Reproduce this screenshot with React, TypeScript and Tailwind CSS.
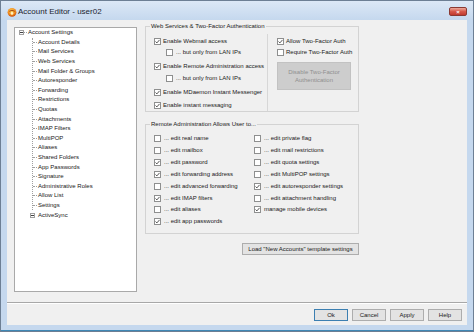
import clsx from 'clsx'

const treeItems = [
  'Account Details',
  'Mail Services',
  'Web Services',
  'Mail Folder & Groups',
  'Autoresponder',
  'Forwarding',
  'Restrictions',
  'Quotas',
  'Attachments',
  'IMAP Filters',
  'MultiPOP',
  'Aliases',
  'Shared Folders',
  'App Passwords',
  'Signature',
  'Administrative Roles',
  'Allow List',
  'Settings',
]

const leftPerms: [string, boolean][] = [
  ['... edit real name', false],
  ['... edit mailbox', false],
  ['... edit password', true],
  ['... edit forwarding address', true],
  ['... edit advanced forwarding', false],
  ['... edit IMAP filters', true],
  ['... edit aliases', false],
  ['... edit app passwords', true],
]

const rightPerms: [string, boolean][] = [
  ['... edit private flag', false],
  ['... edit mail restrictions', false],
  ['... edit quota settings', false],
  ['... edit MultiPOP settings', false],
  ['... edit autoresponder settings', true],
  ['... edit attachment handling', false],
  ['manage mobile devices', true],
]

function Check({ checked }: { checked?: boolean }) {
  return (
    <span className="flex h-[7px] w-[7px] shrink-0 items-center justify-center border border-[#8e8f8f] bg-white">
      {checked && (
        <svg className="h-[5px] w-[5px]" viewBox="0 0 5 5">
          <path d="M0.5 2.5 L1.9 3.9 L4.5 0.9" fill="none" stroke="#2b2b2b" strokeWidth="0.8" />
        </svg>
      )}
    </span>
  )
}

function CheckRow({ label, checked, className }: { label: string; checked?: boolean; className?: string }) {
  return (
    <div className={clsx('flex h-[9px] items-center gap-[2px] whitespace-nowrap', className)}>
      <Check checked={checked} />
      <span>{label}</span>
    </div>
  )
}

function Button({ label, primary }: { label: string; primary?: boolean }) {
  return (
    <div
      className={clsx(
        'flex h-[12px] w-[34px] items-center justify-center border bg-[#e3e3e3]',
        primary ? 'border-[#3c7fb1]' : 'border-[#adadad]',
      )}
    >
      {label}
    </div>
  )
}

function AppIcon() {
  return (
    <svg className="h-[10px] w-[10px] shrink-0" viewBox="0 0 10 10">
      <defs>
        <radialGradient id="ico" cx="0.45" cy="0.35" r="0.7">
          <stop offset="0" stopColor="#ffd35a" />
          <stop offset="0.6" stopColor="#f08a1c" />
          <stop offset="1" stopColor="#c2410c" />
        </radialGradient>
      </defs>
      <circle cx="5" cy="5.3" fill="url(#ico)" r="4.4" />
      <path d="M2.3 4.3 Q5 2.2 7.7 4.3" fill="none" stroke="#8a2a06" strokeWidth="0.8" />
      <circle cx="5" cy="6.4" fill="#fff3c4" r="1.3" />
    </svg>
  )
}

export default function App() {
  return (
    <div className="flex h-[332px] w-[474px] flex-col border border-[#6d7f94] bg-[#c5d8ee] font-['Liberation_Sans',Arial,sans-serif] text-[6px] leading-[9px] text-[#202020]">
      {/* title bar */}
      <div className="flex h-[19px] shrink-0 items-start bg-gradient-to-b from-[#dce8f6] to-[#c5d8ee] pl-[6px] pr-[6px] pt-[6px]">
        <AppIcon />
        <span className="ml-[1px] text-[8px] leading-[10px] text-[#1b2430]">Account Editor - user02</span>
        <div className="flex-1" />
        <div className="flex h-[9px] w-[18px] items-center justify-center rounded-[2px] border border-[#8a3a33] bg-gradient-to-b from-[#eba99c] via-[#d6584a] to-[#c0392f] text-[6px] font-bold leading-none text-white">
          ×
        </div>
      </div>

      {/* client area */}
      <div className="mx-[6px] mb-[5px] flex flex-1 flex-col bg-[#f0f0f0]">
        <div className="flex gap-[8px] pl-[7px] pt-[2px]">
          {/* tree */}
          <div className="mt-[5px] h-[265px] w-[123px] shrink-0 border border-[#a9a9a9] bg-white">
            <div className="flex h-[9.6px] items-center pl-[4px]">
              <span className="flex h-[5px] w-[5px] items-center justify-center border border-[#a0a0a0] bg-white">
                <span className="h-px w-[3px] bg-[#404040]" />
              </span>
              <span className="w-[3px] border-t border-dotted border-[#a0a0a0]" />
              <span className="ml-[1px]">Account Settings</span>
            </div>
            <div className="ml-[17px]">
              <div className="border-l border-dotted border-[#a0a0a0]">
                {treeItems.map(item => (
                  <div key={item} className="flex h-[9.6px] items-center whitespace-nowrap">
                    <span className="w-[4px] border-t border-dotted border-[#a0a0a0]" />
                    <span className="ml-[1px]">{item}</span>
                  </div>
                ))}
              </div>
              <div className="flex h-[9.6px] items-center whitespace-nowrap">
                <span className="-ml-[2px] flex h-[5px] w-[5px] items-center justify-center border border-[#a0a0a0] bg-white">
                  <span className="h-px w-[3px] bg-[#404040]" />
                </span>
                <span className="ml-[3px]">ActiveSync</span>
              </div>
            </div>
          </div>

          {/* right column */}
          <div className="flex w-[214px] flex-col">
            <fieldset className="h-[90px] border border-[#d3d3d3]">
              <legend className="ml-[4px] px-[1px] leading-[8px]">Web Services &amp; Two-Factor Authentication</legend>
              <div className="flex h-[82px] pl-[8px]">
                <div className="w-[113px] pt-[7px]">
                  <CheckRow checked label="Enable Webmail access" />
                  <CheckRow className="ml-[12px] mt-[2px] gap-[3px]" label="... but only from LAN IPs" />
                  <CheckRow checked className="mt-[5px]" label="Enable Remote Administration access" />
                  <CheckRow className="ml-[12px] mt-[3px] gap-[3px]" label="... but only from LAN IPs" />
                  <CheckRow checked className="mt-[5px]" label="Enable MDaemon Instant Messenger" />
                  <CheckRow checked className="mt-[4px]" label="Enable instant messaging" />
                </div>
                <div className="mb-[1px] mt-[4px] w-px bg-[#d7d7d7]" />
                <div className="flex w-[74px] flex-col pl-[9px] pt-[7px]">
                  <CheckRow checked label="Allow Two-Factor Auth" />
                  <CheckRow className="mt-[2px]" label="Require Two-Factor Auth" />
                  <div className="mt-[5px] flex h-[28px] w-[74px] flex-col items-center justify-center border border-[#c2c2c2] bg-[#cdcdcd] leading-[8px] text-[#8f8f8f]">
                    <span>Disable Two-Factor</span>
                    <span>Authentication</span>
                  </div>
                </div>
              </div>
            </fieldset>

            <fieldset className="mt-[8px] h-[114px] border border-[#d3d3d3]">
              <legend className="ml-[4px] px-[1px] leading-[8px]">Remote Administration Allows User to...</legend>
              <div className="grid grid-cols-[100px_1fr] pl-[8px] pt-[4.7px]">
                <div className="flex flex-col">
                  {leftPerms.map(([label, checked]) => (
                    <CheckRow key={label} checked={checked} className="h-[11.9px] gap-[3px]" label={label} />
                  ))}
                </div>
                <div className="flex flex-col">
                  {rightPerms.map(([label, checked]) => (
                    <CheckRow key={label} checked={checked} className="h-[11.9px] gap-[3px]" label={label} />
                  ))}
                </div>
              </div>
            </fieldset>

            <div className="mt-[9px] flex justify-end">
              <div className="flex h-[12px] w-[117px] items-center justify-center border border-[#adadad] bg-[#e3e3e3]">
                Load &quot;New Accounts&quot; template settings
              </div>
            </div>
          </div>
        </div>

        <div className="mt-[10px] border-b border-t border-b-white border-t-[#a8a8a8]" />

        <div className="mt-[5px] flex justify-end gap-[4px] pr-[5px]">
          <Button primary label="Ok" />
          <Button label="Cancel" />
          <Button label="Apply" />
          <Button label="Help" />
        </div>
      </div>
      <div className="h-[1px] bg-[#3f88b5]" />
    </div>
  )
}
